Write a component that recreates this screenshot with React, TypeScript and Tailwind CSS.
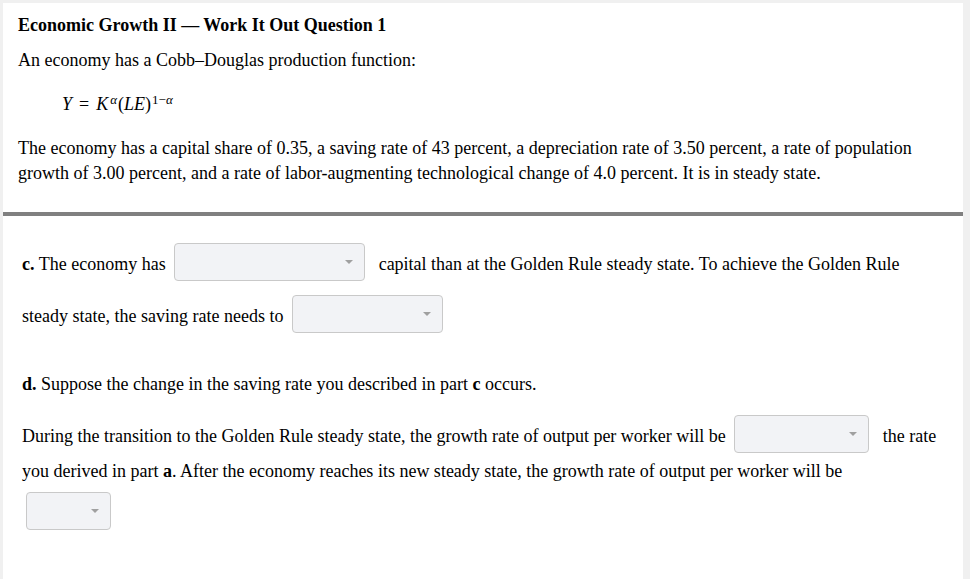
import React from "react";

function Dropdown({ width }: { width: string }) {
  return (
    <span
      className={`relative -top-[2px] inline-block h-[38px] align-[-17.4px] mt-[9.5px] mb-[4.5px] ml-[4px] mr-[13.5px] rounded-[4px] border border-[#c9c9c9] bg-[#f2f3f6] ${width}`}
    >
      <span className="absolute right-[11px] top-1/2 -translate-y-1/2 w-0 h-0 border-l-[4px] border-r-[4px] border-t-[4px] border-l-transparent border-r-transparent border-t-[#a0a0a0]" />
    </span>
  );
}

export default function App() {
  return (
    <div className="min-h-screen bg-[#f0f0f0] pt-[3px] pl-[3px] pr-[7px] font-['Liberation_Serif',serif] text-black">
      <div className="min-h-[576px] bg-white">
        <div className="pl-[15px] pr-4 pt-[10px]">
          <h1 className="text-[18px] leading-[24px] font-bold">
            Economic Growth II — Work It Out Question 1
          </h1>
          <p className="mt-[11px] text-[18px] leading-[25px]">
            An economy has a Cobb–Douglas production function:
          </p>
          <p className="mt-[19px] pl-[44px] text-[18px] leading-[25px]">
            <i>Y</i>
            <span className="mx-[7px]">=</span>
            <i>K</i>
            <sup className="text-[13px] italic ml-[2px]">α</sup>
            <span className="ml-[1px]">(</span>
            <i>LE</i>)
            <sup className="text-[13px] ml-[1px]">
              1−<i>α</i>
            </sup>
          </p>
          <p className="mt-[19px] text-[18px] leading-[25px]">
            The economy has a capital share of 0.35, a saving rate of 43 percent, a depreciation rate of 3.50 percent, a
            rate of population growth of 3.00 percent, and a rate of labor-augmenting technological change of 4.0
            percent. It is in steady state.
          </p>
        </div>
        <div className="mt-[25.5px] h-[4px] bg-[#808080]" />
        <div className="pl-[19px] pr-6 pt-[19.5px] text-[18px] leading-[25px]">
          <p>
            <b>c.</b> The economy has <Dropdown width="w-[191px]" />
            capital than at the Golden Rule steady state. To achieve the Golden Rule steady state, the saving rate
            needs to <Dropdown width="w-[151px]" />
          </p>
          <p className="mt-[32.5px]">
            <b>d.</b> Suppose the change in the saving rate you described in part <b>c</b> occurs.
          </p>
          <p className="mt-[10.5px]">
            During the transition to the Golden Rule steady state, the growth rate of output per worker will be{" "}
            <Dropdown width="w-[135px]" />
            the rate you derived in part <b>a</b>. After the economy reaches its new steady state, the growth rate of
            output per worker will be <Dropdown width="w-[85px]" />
          </p>
        </div>
      </div>
    </div>
  );
}
